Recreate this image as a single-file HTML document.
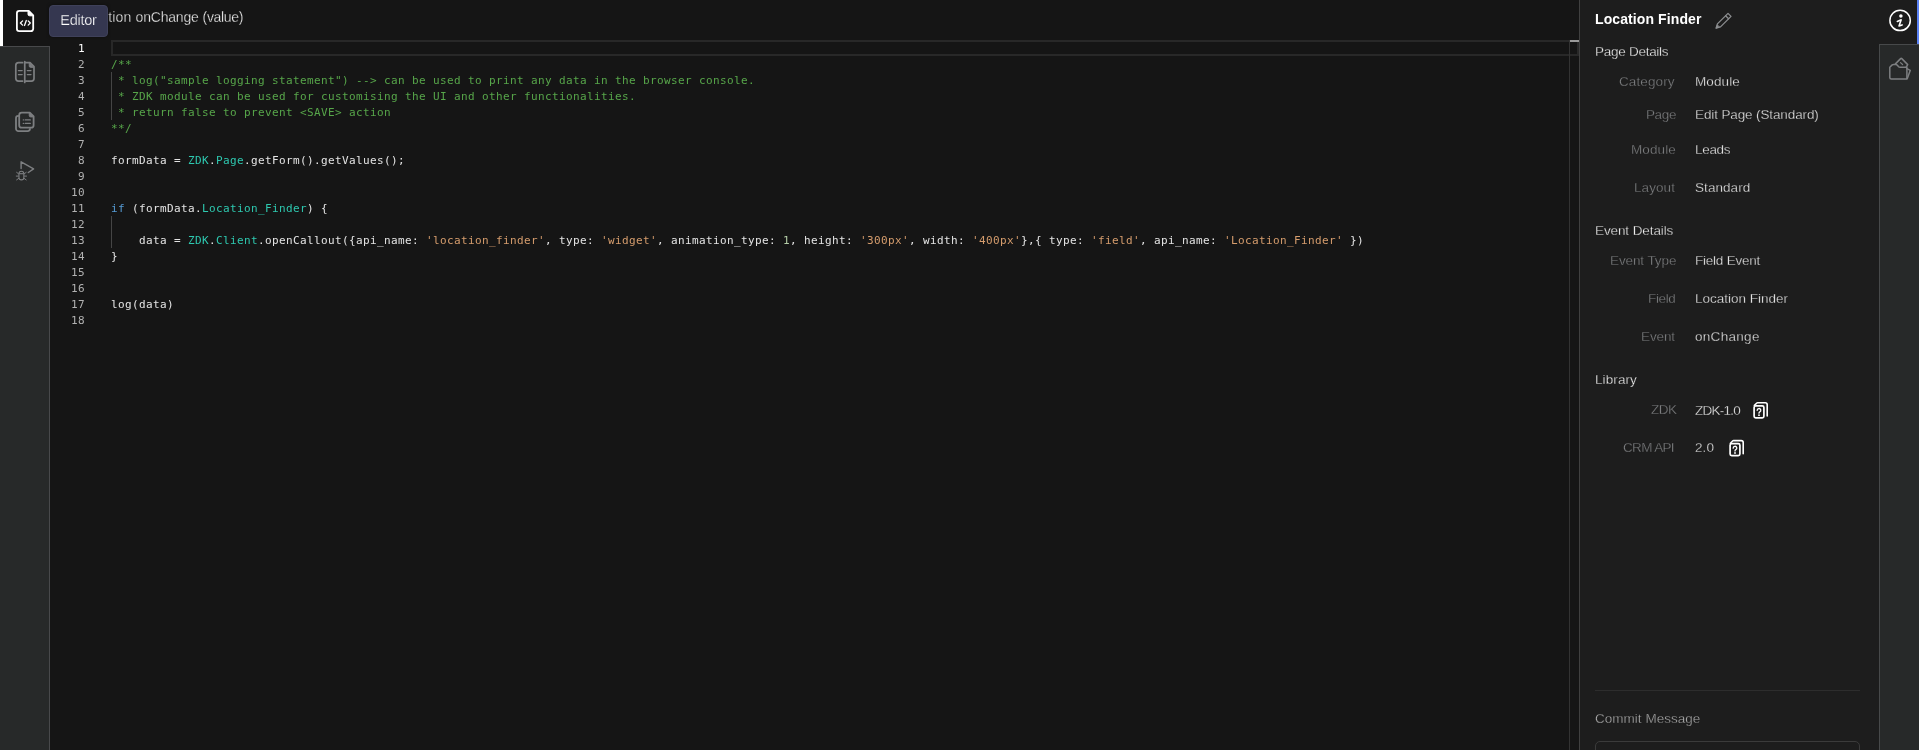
<!DOCTYPE html>
<html lang="en">
<head>
<meta charset="utf-8">
<title>Location Finder - Client Script Editor</title>
<style>
*{box-sizing:border-box;margin:0;padding:0}
html,body{width:1919px;height:750px;overflow:hidden;background:#151515}
body{position:relative;font-family:"Liberation Sans",Arial,sans-serif;color:#e6e6e6;-webkit-font-smoothing:antialiased}
.abs{position:absolute}
/* left rail */
#strip{left:0;top:0;width:3px;height:46px;background:#fff}
#tabactive{left:3px;top:0;width:47px;height:46px;background:#151515}
#rail{left:0;top:46px;width:50px;height:704px;background:#272929;border-top:1px solid #48494b;border-right:1px solid #48494b}
.ico{position:absolute;overflow:visible}
/* tooltip */
#tip{left:49px;top:5px;width:59px;height:32px;background:#353750;border:1px solid #3f415a;border-radius:4px;letter-spacing:-.25px;color:#fff;-webkit-text-stroke:.25px #353750;font-size:14.5px;line-height:29px;text-align:center;z-index:5;will-change:transform;box-shadow:0 0 3px rgba(0,0,0,.5)}
#fn{top:8.6px;left:0;width:400px;height:17px;font-size:14px;line-height:17px;color:#f4f4f4;-webkit-text-stroke:.3px #151515;white-space:pre;z-index:1;will-change:transform}
#fn span{position:absolute;top:0}
/* editor */
#curline{left:111px;top:40px;width:1468px;height:16px;border:2px solid #282828}
#ruler{left:1569px;top:40px;width:1px;height:710px;background:#333}
#rmark{left:1570px;top:40px;width:9px;height:2px;background:#9a9a9a}
.guide{width:1px;background:#454545;left:111px}
#gutter{left:51px;top:41px;width:34px;text-align:right;color:#b2b2b2}
#gutter div.on{color:#fff}
#code{left:111px;top:41px}
#gutter,#code{font-family:"DejaVu Sans Mono","Liberation Mono",monospace;font-size:11px;letter-spacing:.3774px;line-height:16px;white-space:pre;will-change:transform}
#gutter div,#code div{height:16px}
#code{color:#e4e4e4}
.c{color:#57a64a}.t{color:#2ec9b0}.k{color:#569cd6}.s{color:#d69d6d}.n{color:#b5cea8}
/* right panel */
#panel{left:1579px;top:0;width:300px;height:750px;background:#1d1d1d;border-left:1px solid #404040}
#rbar{left:1879px;top:44px;width:40px;height:706px;background:#272929;border-top:1px solid #47494a;border-left:1px solid #47494a}
#rtab{left:1879px;top:0;width:40px;height:44px;background:#1d1d1d}
#blue{left:1917px;top:0;width:2px;height:44px;background:#5b82f5}

/* panel text */
.pt{position:absolute;white-space:pre;font-size:13.5px;line-height:20px;height:20px;will-change:transform}
.h1{left:1595px;top:9px;font-size:14px;font-weight:bold;color:#fff;letter-spacing:.1px}
.sec{left:1595px;color:#f6f6f6;-webkit-text-stroke:.3px #1d1d1d}
.lb{right:242px;text-align:right;color:#808284;-webkit-text-stroke:.3px #1d1d1d}
.vl{left:1695px;color:#ececec;-webkit-text-stroke:.3px #1d1d1d}
#sep{left:1595px;top:690px;width:265px;height:1px;background:#2d2d2d}
#cm{left:1595px;top:709px;color:#b0b0b0;-webkit-text-stroke:.3px #1d1d1d;letter-spacing:.02px}
#ta{left:1595px;top:741px;width:265px;height:40px;border:1px solid #3b3b3b;border-radius:5px}
</style>
</head>
<body>
<div id="strip" class="abs"></div>
<div id="tabactive" class="abs"></div>
<div id="rail" class="abs"></div>
<div id="fn" class="abs"><span style="left:80.9px;letter-spacing:.2px">function</span><span style="left:135.6px;letter-spacing:-.2px">onChange</span><span style="left:202.6px;letter-spacing:-.34px">(value)</span></div>
<div id="tip" class="abs">Editor</div>

<div id="curline" class="abs"></div>
<div id="ruler" class="abs"></div>
<div id="rmark" class="abs"></div>
<div class="abs guide" style="top:72px;height:48px"></div>
<div class="abs guide" style="top:216px;height:32px"></div>

<div id="gutter" class="abs"><div class="on">1</div><div>2</div><div>3</div><div>4</div><div>5</div><div>6</div><div>7</div><div>8</div><div>9</div><div>10</div><div>11</div><div>12</div><div>13</div><div>14</div><div>15</div><div>16</div><div>17</div><div>18</div></div>

<div id="code" class="abs"><div> </div><div class="c">/**</div><div class="c"> * log("sample logging statement") --&gt; can be used to print any data in the browser console.</div><div class="c"> * ZDK module can be used for customising the UI and other functionalities.</div><div class="c"> * return false to prevent &lt;SAVE&gt; action</div><div class="c">**/</div><div> </div><div>formData = <span class="t">ZDK</span>.<span class="t">Page</span>.getForm().getValues();</div><div> </div><div> </div><div><span class="k">if</span> (formData.<span class="t">Location_Finder</span>) {</div><div> </div><div>    data = <span class="t">ZDK</span>.<span class="t">Client</span>.openCallout({api_name: <span class="s">'location_finder'</span>, type: <span class="s">'widget'</span>, animation_type: <span class="n">1</span>, height: <span class="s">'300px'</span>, width: <span class="s">'400px'</span>},{ type: <span class="s">'field'</span>, api_name: <span class="s">'Location_Finder'</span> })</div><div>}</div><div> </div><div> </div><div>log(data)</div><div> </div></div>

<div id="panel" class="abs"></div>
<div class="pt h1">Location Finder</div>
<div class="pt sec" style="top:41.67px;letter-spacing:-0.27px">Page Details</div>
<div class="pt sec" style="top:220.67px;letter-spacing:-0.10px">Event Details</div>
<div class="pt sec" style="top:369.67px;letter-spacing:0.10px">Library</div>
<div class="pt lb" style="top:71.67px;letter-spacing:0.10px;right:244px">Category</div>
<div class="pt vl" style="top:71.67px;letter-spacing:0.12px">Module</div>
<div class="pt lb" style="top:104.67px;letter-spacing:-0.38px;right:243px">Page</div>
<div class="pt vl" style="top:104.67px;letter-spacing:-0.12px">Edit Page (Standard)</div>
<div class="pt lb" style="top:139.67px;letter-spacing:0.12px;right:242.7px">Module</div>
<div class="pt vl" style="top:139.67px;letter-spacing:-0.30px">Leads</div>
<div class="pt lb" style="top:177.67px;letter-spacing:0.08px;right:243.7px">Layout</div>
<div class="pt vl" style="top:177.67px;letter-spacing:0.06px">Standard</div>
<div class="pt lb" style="top:250.67px;letter-spacing:-0.10px;right:243px">Event Type</div>
<div class="pt vl" style="top:250.67px;letter-spacing:-0.23px">Field Event</div>
<div class="pt lb" style="top:288.67px;letter-spacing:-0.35px;right:243.7px">Field</div>
<div class="pt vl" style="top:288.67px;letter-spacing:-0.00px">Location Finder</div>
<div class="pt lb" style="top:326.67px;letter-spacing:-0.11px;right:244px">Event</div>
<div class="pt vl" style="top:326.67px;letter-spacing:0.30px">onChange</div>
<div class="pt lb" style="top:399.67px;letter-spacing:-0.50px;right:242.7px">ZDK</div>
<div class="pt vl" style="top:400.67px;letter-spacing:-0.75px">ZDK-1.0</div>
<div class="pt lb" style="top:437.67px;letter-spacing:-0.65px;right:244.6px">CRM API</div>
<div class="pt vl" style="top:437.67px;letter-spacing:0.07px">2.0</div>
<div id="sep" class="abs"></div>
<div id="cm" class="pt">Commit Message</div>
<div id="ta" class="abs"></div>
<div id="rtab" class="abs"></div>
<div id="blue" class="abs"></div>
<div id="rbar" class="abs"></div>

<svg id="icons" class="abs" style="left:0;top:0;z-index:9" width="1919" height="750" viewBox="0 0 1919 750" fill="none" stroke-linecap="round" stroke-linejoin="round">
<!-- file-code (active) -->
<g stroke="#fff" stroke-width="1.8">
<path d="M19.3 10.9H28.8L33.2 15.3V28.8a2.4 2.4 0 0 1-2.4 2.4H19.3a2.4 2.4 0 0 1-2.4-2.4V13.3a2.4 2.4 0 0 1 2.4-2.4Z"/>
<path d="M28 11V14.2a1.6 1.6 0 0 0 1.6 1.6H33L28.6 11Z" fill="#fff" stroke-width="1"/>
<path d="M22.6 20.9L20.4 23 22.6 25.1M26.3 20.5L24.5 25.5M28.2 20.9L30.3 23 28.2 25.1" stroke-width="1.3"/>
</g>
<!-- split docs -->
<g stroke="#7d7f81" stroke-width="1.7">
<path d="M22.6 62.7H18.6a2.8 2.8 0 0 0-2.8 2.8V78.3a2.8 2.8 0 0 0 2.8 2.8H22.6"/>
<path d="M24.75 61.6V82.4"/>
<path d="M25.6 62.7H30L34 66.7V78.5a2.6 2.6 0 0 1-2.6 2.6H25.6"/>
<path d="M29.2 62.9V66a1.4 1.4 0 0 0 1.4 1.4H33.8L29.6 62.9Z" fill="#7d7f81" stroke-width=".8"/>
<path d="M18.4 70.5H22.2M18.4 74.6H22.2M27.3 70.5H31M27.3 74.6H31" stroke-width="1.25"/>
</g>
<!-- doc stack list -->
<g stroke="#7d7f81" stroke-width="1.8">
<path d="M22 112.7H29.8L33.6 116.5V125.2a2.5 2.5 0 0 1-2.5 2.5H21.7a2.5 2.5 0 0 1-2.5-2.5V115.2a2.5 2.5 0 0 1 2.5-2.5Z"/>
<path d="M29.2 112.9V115.6a1.4 1.4 0 0 0 1.4 1.4H33.4L29.6 112.9Z" fill="#7d7f81" stroke-width=".8"/>
<path d="M18.4 115.9H18.3a2.3 2.3 0 0 0-2.3 2.3V128.7a2.4 2.4 0 0 0 2.4 2.4H27.6a2.4 2.4 0 0 0 2.4-2.3"/>
<path d="M23.3 119.9H23.5M25.2 119.9H30.3M23.3 123.4H23.5M25.2 123.4H30.3" stroke-width="1.3"/>
</g>
<!-- bug + play -->
<g stroke="#7d7f81" stroke-width="1.6">
<path d="M21.1 168.6V161.8L33.6 168.9 28.3 172.5" stroke-width="1.4"/>
<g stroke-width="1.1" stroke-linecap="butt">
<rect x="18.95" y="171.2" width="4.9" height="8.7" rx="2.45"/>
<path d="M19.2 173.7H23.6"/>
<path d="M16.3 172.1L18.8 174M15.9 176.1H18.7M16.3 180.1L19 178.2M26.5 172.1L24 174M26.9 176.1H24.1M26.5 180.1L23.8 178.2" stroke-width="1"/>
</g>
</g>
<!-- pencil -->
<g stroke="#8b8d8f" stroke-width="1.3">
<path d="M1728 13.4L1731 16.4 1720.5 26.9 1716.1 28.2 1717.4 23.9Z"/>
<path d="M1725.6 15.8L1728.6 18.8"/>
<path d="M1717.3 25.2L1716.1 28.2 1719.1 27Z" fill="#8b8d8f" stroke-width=".8"/>
</g>
<!-- info -->
<g stroke="#fff">
<circle cx="1900.1" cy="20.4" r="10.2" stroke-width="1.5"/>
<circle cx="1900.9" cy="16" r="1.75" fill="#fff" stroke="none"/>
<path d="M1897.3 21.5L1901.2 19.8 1899 26 1902.1 24.9" stroke-width="1.55"/>
</g>
<!-- folder with tag -->
<g stroke="#7d7f81" stroke-width="1.5">
<path d="M1889.8 67.2L1892.2 64.9Q1892.8 64.4 1893.6 64.4H1895.8Q1896.8 64.4 1897.4 65.2L1898.4 66.4Q1899.1 67.2 1900.1 67.2H1906.9V78.9H1891.3a1.5 1.5 0 0 1-1.5-1.5Z"/>
<path d="M1906.9 68.6L1910.3 70.3 1907.3 78.6"/>
<path d="M1895.4 63.9L1900.6 58.6Q1901.2 58 1901.8 58.6L1907.7 64.6 1906.4 66.9"/>
<path d="M1900.5 62.6L1902.6 64.5" stroke-width="1.2"/>
</g>
<!-- help docs -->
<g stroke="#fff" stroke-width="1.7">
<rect x="1754.1" y="405.9" width="9.8" height="12" rx="1.6"/>
<path d="M1754.4 405.4L1756.6 403.2Q1757 402.8 1757.6 402.8H1765.2a2 2 0 0 1 2 2V416" stroke-width="1.6"/>
<path d="M1757.2 410.4a1.8 1.8 0 1 1 2.6 1.5Q1759 412.3 1759 413.2" stroke-width="1.3"/>
<circle cx="1759" cy="415.2" r=".9" fill="#fff" stroke="none"/>
</g>
<g stroke="#fff" stroke-width="1.7" transform="translate(-24 37.8)">
<rect x="1754.1" y="405.9" width="9.8" height="12" rx="1.6"/>
<path d="M1754.4 405.4L1756.6 403.2Q1757 402.8 1757.6 402.8H1765.2a2 2 0 0 1 2 2V416" stroke-width="1.6"/>
<path d="M1757.2 410.4a1.8 1.8 0 1 1 2.6 1.5Q1759 412.3 1759 413.2" stroke-width="1.3"/>
<circle cx="1759" cy="415.2" r=".9" fill="#fff" stroke="none"/>
</g>
</svg>
</body>
</html>
